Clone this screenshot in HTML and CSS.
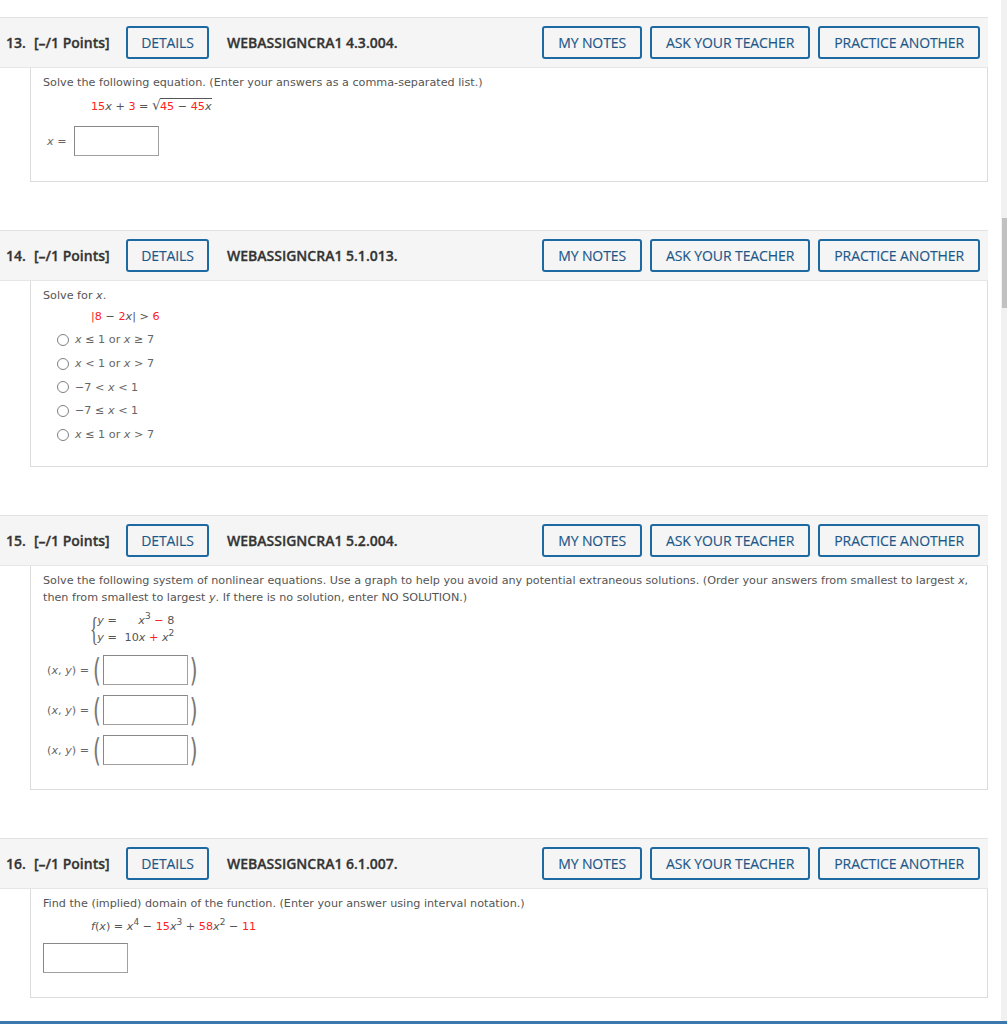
FILE: index.html
```html
<!DOCTYPE html>
<html lang="en">
<head>
  <meta charset="UTF-8">
  <title>WebAssign</title>
  <link rel="stylesheet" href="styles.css">
</head>
<body>

<div class="page">

  <!-- question 13 -->
  <div class="question q13">
    <div class="q-head">
      <span class="q-num">13.</span>
      <span class="q-points">[&ndash;/1 Points]</span>
      <a class="btn btn-details">DETAILS</a>
      <span class="q-title">WEBASSIGNCRA1 4.3.004.</span>
      <div class="q-actions">
        <a class="btn">MY NOTES</a>
        <a class="btn">ASK YOUR TEACHER</a>
        <a class="btn">PRACTICE ANOTHER</a>
      </div>
    </div>
    <div class="q-body">
      <p class="prompt">Solve the following equation. (Enter your answers as a comma-separated list.)</p>
      <div class="math indent"><span class="red">15</span><i>x</i> + <span class="red">3</span> = <span class="sqrt">&radic;</span><span class="radicand"><span class="red">45</span> &minus; <span class="red">45</span><i>x</i></span></div>
      <div class="answer-row">
        <span class="label"><i>x</i> = </span>
        <span class="box"></span>
      </div>
    </div>
  </div>

  <!-- question 14 -->
  <div class="question q14">
    <div class="q-head">
      <span class="q-num">14.</span>
      <span class="q-points">[&ndash;/1 Points]</span>
      <a class="btn btn-details">DETAILS</a>
      <span class="q-title">WEBASSIGNCRA1 5.1.013.</span>
      <div class="q-actions">
        <a class="btn">MY NOTES</a>
        <a class="btn">ASK YOUR TEACHER</a>
        <a class="btn">PRACTICE ANOTHER</a>
      </div>
    </div>
    <div class="q-body">
      <p class="prompt">Solve for <i>x</i>.</p>
      <div class="math indent"><span class="red">|8</span> &minus; <span class="red">2</span><i>x</i>| &gt; <span class="red">6</span></div>
      <ul class="choices">
        <li><span class="radio"></span><span><i>x</i> &le; 1 or <i>x</i> &ge; 7</span></li>
        <li><span class="radio"></span><span><i>x</i> &lt; 1 or <i>x</i> &gt; 7</span></li>
        <li><span class="radio"></span><span>&minus;7 &lt; <i>x</i> &lt; 1</span></li>
        <li><span class="radio"></span><span>&minus;7 &le; <i>x</i> &lt; 1</span></li>
        <li><span class="radio"></span><span><i>x</i> &le; 1 or <i>x</i> &gt; 7</span></li>
      </ul>
    </div>
  </div>

  <!-- question 15 -->
  <div class="question q15">
    <div class="q-head">
      <span class="q-num">15.</span>
      <span class="q-points">[&ndash;/1 Points]</span>
      <a class="btn btn-details">DETAILS</a>
      <span class="q-title">WEBASSIGNCRA1 5.2.004.</span>
      <div class="q-actions">
        <a class="btn">MY NOTES</a>
        <a class="btn">ASK YOUR TEACHER</a>
        <a class="btn">PRACTICE ANOTHER</a>
      </div>
    </div>
    <div class="q-body">
      <p class="prompt">Solve the following system of nonlinear equations. Use a graph to help you avoid any potential extraneous solutions. (Order your answers from smallest to largest <i>x</i>,<br>then from smallest to largest <i>y</i>. If there is no solution, enter NO SOLUTION.)</p>
      <div class="system indent">
        <span class="brace">{</span>
        <div class="sys-rows">
          <span class="lhs"><i>y</i> =</span><span class="rhs"><i>x</i><sup>3</sup> <span class="red">&minus;</span> 8</span>
          <span class="lhs"><i>y</i> =</span><span class="rhs">10<i>x</i> <span class="red">+</span> <i>x</i><sup>2</sup></span>
        </div>
      </div>
      <div class="pairs">
        <div class="pair"><span class="label">(<i>x</i>, <i>y</i>) =</span><span class="paren">(</span><span class="box"></span><span class="paren">)</span></div>
        <div class="pair"><span class="label">(<i>x</i>, <i>y</i>) =</span><span class="paren">(</span><span class="box"></span><span class="paren">)</span></div>
        <div class="pair"><span class="label">(<i>x</i>, <i>y</i>) =</span><span class="paren">(</span><span class="box"></span><span class="paren">)</span></div>
      </div>
    </div>
  </div>

  <!-- question 16 -->
  <div class="question q16">
    <div class="q-head">
      <span class="q-num">16.</span>
      <span class="q-points">[&ndash;/1 Points]</span>
      <a class="btn btn-details">DETAILS</a>
      <span class="q-title">WEBASSIGNCRA1 6.1.007.</span>
      <div class="q-actions">
        <a class="btn">MY NOTES</a>
        <a class="btn">ASK YOUR TEACHER</a>
        <a class="btn">PRACTICE ANOTHER</a>
      </div>
    </div>
    <div class="q-body">
      <p class="prompt">Find the (implied) domain of the function. (Enter your answer using interval notation.)</p>
      <div class="math indent"><i>f</i>(<i>x</i>) = <i>x</i><sup>4</sup> &minus; <span class="red">15</span><i>x</i><sup>3</sup> + <span class="red">58</span><i>x</i><sup>2</sup> &minus; <span class="red">11</span></div>
      <span class="box box-wide"></span>
    </div>
  </div>

</div>

<div class="scrollbar"><div class="thumb"></div></div>
<div class="footer-line"></div>

</body>
</html>
```

FILE: styles.css
```css
html, body {
  margin: 0;
  padding: 0;
  height: 1024px;
  overflow: hidden;
  background-color: #fff;
}
body {
  font-family: "Open Sans", "DejaVu Sans", sans-serif;
  color: #333;
}
.page {
  width: 988px;
  padding-top: 17px;
}
.question {
  margin-bottom: 48px;
}

/* header bar */
.q-head {
  display: flex;
  align-items: center;
  height: 49px;
  padding-left: 6px;
  padding-right: 8px;
  background-color: #f5f5f5;
  border-top: 1px solid #e2e2e2;
  border-bottom: 1px solid #e6e6e6;
  font-size: 14px;
}
.q-num,
.q-points,
.q-title {
  font-weight: 600;
  -webkit-text-stroke: 0.3px #333;
}
.q-num {
  width: 28px;
}
.q-points {
  width: 92px;
}
.q-title {
  margin-left: 18px;
}
.q-actions {
  margin-left: auto;
  display: flex;
  gap: 8px;
}
.btn {
  display: inline-flex;
  align-items: center;
  justify-content: center;
  height: 29px;
  padding: 0 14px;
  border: 2px solid #1d6aa3;
  border-radius: 3px;
  color: #1d5789;
  font-size: 14px;
  text-decoration: none;
  letter-spacing: -0.1px;
  -webkit-text-stroke: 0.15px #1d5789;
}
.btn-details {
  width: 79px;
  padding: 0;
}

/* question body */
.q-body {
  margin-left: 30px;
  border: 1px solid #dcdcdc;
  border-top: none;
  padding: 6px 12px 0 12px;
  font-family: "DejaVu Sans", sans-serif;
  font-size: 11.2px;
  color: #555;
}
.q13 .q-body { height: 107px; }
.q14 .q-body { height: 179px; }
.q15 .q-body { height: 217px; }
.q16 .q-body { height: 102px; }

.prompt {
  margin: 0;
  line-height: 17px;
}
.math {
  line-height: 17px;
  margin-top: 6px;
}
.q14 .math {
  margin-top: 4px;
}
.indent {
  padding-left: 48px;
}
.red {
  color: #f22;
}
i {
  font-style: italic;
}
sup {
  font-size: 9px;
  line-height: 0;
}
.sqrt {
  font-size: 14px;
  margin-right: -1px;
}
.radicand {
  border-top: 1px solid #555;
  padding-top: 1px;
}

.box {
  display: inline-block;
  width: 83px;
  height: 28px;
  border: 1px solid #a0a0a0;
  border-top-color: #888;
  border-left-color: #888;
  background-color: #fff;
}
.answer-row {
  display: flex;
  align-items: center;
  gap: 7px;
  margin-top: 11px;
  padding-left: 4px;
}
.label {
  color: #666;
}
.box-wide {
  margin-top: 8px;
}

/* radio choices */
.choices {
  list-style-type: none;
  margin: 3px 0 0 0;
  padding: 0 0 0 14px;
}
.choices li {
  display: flex;
  align-items: center;
  height: 23.7px;
  color: #666;
}
.radio {
  display: inline-block;
  width: 10px;
  height: 10px;
  border: 1px solid #808080;
  border-radius: 50%;
  margin-right: 6px;
}

/* system of equations */
.system {
  display: flex;
  align-items: center;
  margin-top: 6px;
  padding-left: 47px;
}
.brace {
  font-family: "Liberation Serif", serif;
  font-size: 34px;
  line-height: 34px;
  color: #666;
  transform: scaleX(0.5);
  transform-origin: left center;
  margin-right: -9px;
}
.sys-rows {
  display: grid;
  grid-template-columns: 27px 50px;
  line-height: 17px;
}
.rhs {
  text-align: right;
}

.pairs {
  margin-top: 4px;
  padding-left: 4px;
}
.pair {
  display: flex;
  align-items: center;
  height: 40px;
}
.pair .label {
  width: 44px;
}
.paren {
  font-size: 20px;
  color: #777;
  transform: scaleY(1.6);
  margin: 0 2px;
}

/* browser chrome bits */
.scrollbar {
  position: fixed;
  top: 0;
  right: 0;
  width: 6px;
  height: 1024px;
  background-color: #f1f1f1;
}
.thumb {
  margin-top: 218px;
  margin-left: 1px;
  height: 90px;
  background-color: #c1c1c1;
}
.footer-line {
  position: fixed;
  left: 0;
  right: 0;
  bottom: 0;
  height: 3px;
  background-color: #3b78ad;
}
```
